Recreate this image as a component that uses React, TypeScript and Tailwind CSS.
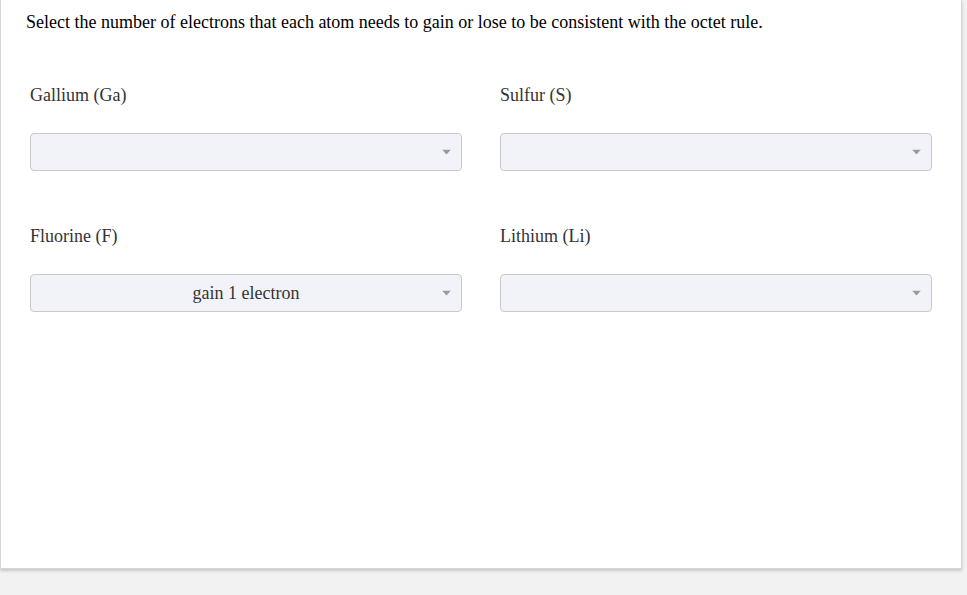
const fields = [
  { label: "Gallium (Ga)", value: "" },
  { label: "Sulfur (S)", value: "" },
  { label: "Fluorine (F)", value: "gain 1 electron" },
  { label: "Lithium (Li)", value: "" },
];

function Caret() {
  return (
    <svg width="9" height="5" viewBox="0 0 9 5" className="absolute right-[10px] top-1/2 -translate-y-1/2" aria-hidden="true">
      <path d="M0 0h9L4.5 5z" fill="#9a9a9a" />
    </svg>
  );
}

function SelectBox({ value }: { value: string }) {
  return (
    <div className="relative flex h-[38px] w-[432px] items-center justify-center rounded-[4px] border border-[#c9c9cc] bg-[#f2f3f8] text-[18px] text-[#333]">
      <span>{value}</span>
      <Caret />
    </div>
  );
}

export default function App() {
  return (
    <div className="h-[595px] w-[967px] bg-[#f2f2f2] font-['Liberation_Serif',serif]">
      <div className="h-[569px] w-[962px] border-l border-r border-b border-[#d6d6d6] bg-white shadow-[0_2px_3px_rgba(0,0,0,0.18)]">
        <p className="pl-[25px] pt-[11px] text-[18px] leading-[22px] text-black">
          Select the number of electrons that each atom needs to gain or lose to be consistent with the octet rule.
        </p>
        <div className="grid grid-cols-[432px_432px] gap-x-[38px] gap-y-[54px] pl-[29px] pt-[51px]">
          {fields.map((f) => (
            <div key={f.label} className="flex flex-col">
              <div className="h-[49px] text-[18px] leading-[22px] text-[#333]">{f.label}</div>
              <SelectBox value={f.value} />
            </div>
          ))}
        </div>
      </div>
    </div>
  );
}
